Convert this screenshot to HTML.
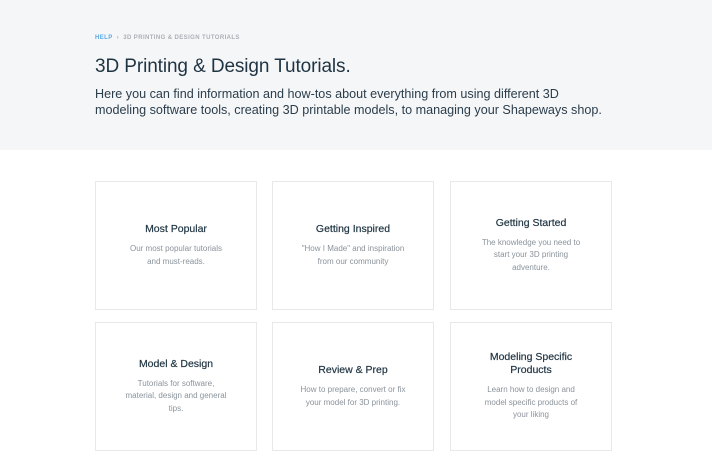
<!DOCTYPE html>
<html><head><meta charset="utf-8"><style>
*{margin:0;padding:0;box-sizing:border-box}
body{width:712px;height:427px;overflow:hidden;background:#fff;font-family:"Liberation Sans",sans-serif}
.hd{position:absolute;left:0;top:0;width:712px;height:150px;background:#f5f6f8}
.bc{position:absolute;left:95px;top:35px;font-size:6px;letter-spacing:.4px;color:#aab0b6;font-weight:bold}
.bc b{color:#5aa7e6}
h1{position:absolute;left:95px;top:56px;font-size:19px;font-weight:normal;color:#1f3442;letter-spacing:-.1px}
.p{position:absolute;left:95px;top:86px;width:600px;font-size:12.6px;line-height:16px;color:#2b3d4a;white-space:nowrap}
.c{position:absolute;width:162px;height:129px;border:1px solid #e6e8ea;background:#fff;display:flex;flex-direction:column;align-items:center;justify-content:center;text-align:center}
.c h3{font-size:10.5px;font-weight:normal;color:#1f3442;line-height:13px;margin-bottom:7px;-webkit-text-stroke:.2px #1f3442}
.c p{font-size:8px;line-height:12.5px;color:#8a939b;white-space:nowrap}
</style></head><body>
<div class="hd"></div>
<div class="bc"><b>HELP</b> &nbsp;›&nbsp; 3D PRINTING &amp; DESIGN TUTORIALS</div>
<h1>3D Printing &amp; Design Tutorials.</h1>
<div class="p">Here you can find information and how-tos about everything from using different 3D<br>modeling software tools, creating 3D printable models, to managing your Shapeways shop.</div>
<div class="c" style="left:95px;top:181px"><h3>Most Popular</h3><p>Our most popular tutorials<br>and must-reads.</p></div>
<div class="c" style="left:272px;top:181px"><h3>Getting Inspired</h3><p>"How I Made" and inspiration<br>from our community</p></div>
<div class="c" style="left:450px;top:181px"><h3>Getting Started</h3><p>The knowledge you need to<br>start your 3D printing<br>adventure.</p></div>
<div class="c" style="left:95px;top:322px"><h3>Model &amp; Design</h3><p>Tutorials for software,<br>material, design and general<br>tips.</p></div>
<div class="c" style="left:272px;top:322px"><h3>Review &amp; Prep</h3><p>How to prepare, convert or fix<br>your model for 3D printing.</p></div>
<div class="c" style="left:450px;top:322px"><h3>Modeling Specific<br>Products</h3><p>Learn how to design and<br>model specific products of<br>your liking</p></div>
</body></html>
